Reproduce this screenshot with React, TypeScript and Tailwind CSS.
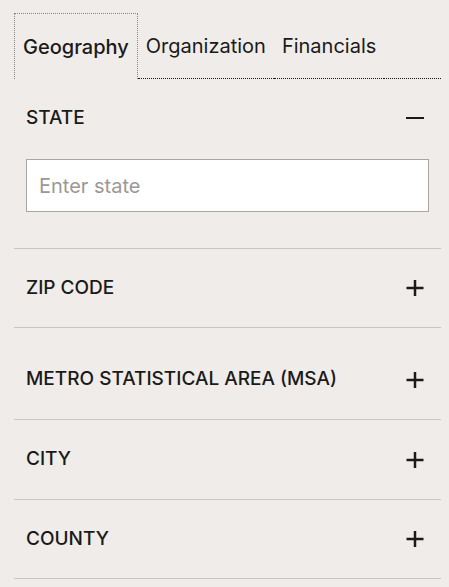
import { useState } from "react";

const sections = [
  { id: "state", label: "STATE", placeholder: "Enter state", h: "h-[78px]" },
  { id: "zip", label: "ZIP CODE", placeholder: "Enter zip code", h: "h-[78px]" },
  { id: "msa", label: "METRO STATISTICAL AREA (MSA)", placeholder: "Enter MSA", h: "h-[91px] pt-[12px]" },
  { id: "city", label: "CITY", placeholder: "Enter city", h: "h-[79px]" },
  { id: "county", label: "COUNTY", placeholder: "Enter county", h: "h-[78px]" },
];

const tabs = ["Geography", "Organization", "Financials"];

function ToggleIcon({ open }: { open: boolean }) {
  return (
    <svg width="18" height="18" viewBox="0 0 18 18" className="shrink-0">
      {open ? (
        <rect x="0" y="8" width="18" height="2" fill="#1a1a1a" />
      ) : (
        <>
          <rect x="0.5" y="7.75" width="17" height="2.5" fill="#1a1a1a" />
          <rect x="7.75" y="1" width="2.5" height="16" fill="#1a1a1a" />
        </>
      )}
    </svg>
  );
}

export default function App() {
  const [activeTab, setActiveTab] = useState("Geography");
  const [openSection, setOpenSection] = useState<string | null>("state");

  return (
    <div
      className="min-h-[587px] bg-[#f0ece9] pl-[14px] pr-[8px] pt-[13px] text-[#1a1a1a]"
      style={{ fontFamily: "Inter, 'Liberation Sans', sans-serif" }}
    >
      <div className="flex h-[66px]">
        {tabs.map((tab) => {
          const active = tab === activeTab;
          return (
            <button
              key={tab}
              onClick={() => setActiveTab(tab)}
              className={
                active
                  ? "flex items-center px-[8px] text-[20px] font-medium border border-b-0 border-dotted border-[#8a8580]"
                  : "flex items-center px-[8px] text-[20px] border-b border-dotted border-[#1a1a1a]"
              }
            >
              {tab}
            </button>
          );
        })}
        <div className="flex-1 border-b border-dotted border-[#1a1a1a]" />
      </div>

      {sections.map((s) => {
        const open = openSection === s.id;
        return (
          <div key={s.id} className="border-b border-[#c9c5c1]">
            <button
              onClick={() => setOpenSection(open ? null : s.id)}
              className={`flex w-full items-center justify-between pl-3 pr-[17px] text-left ${s.h}`}
            >
              <span className="text-[19px] font-medium">{s.label}</span>
              <ToggleIcon open={open} />
            </button>
            {open && (
              <div className="pl-3 pr-3 pt-[2px] pb-[36px]">
                <input
                  type="text"
                  placeholder={s.placeholder}
                  className="h-[53px] w-full border border-[#a9a6a3] bg-white px-3 text-[20px] outline-none placeholder:text-[#9b9895]"
                />
              </div>
            )}
          </div>
        );
      })}
    </div>
  );
}
